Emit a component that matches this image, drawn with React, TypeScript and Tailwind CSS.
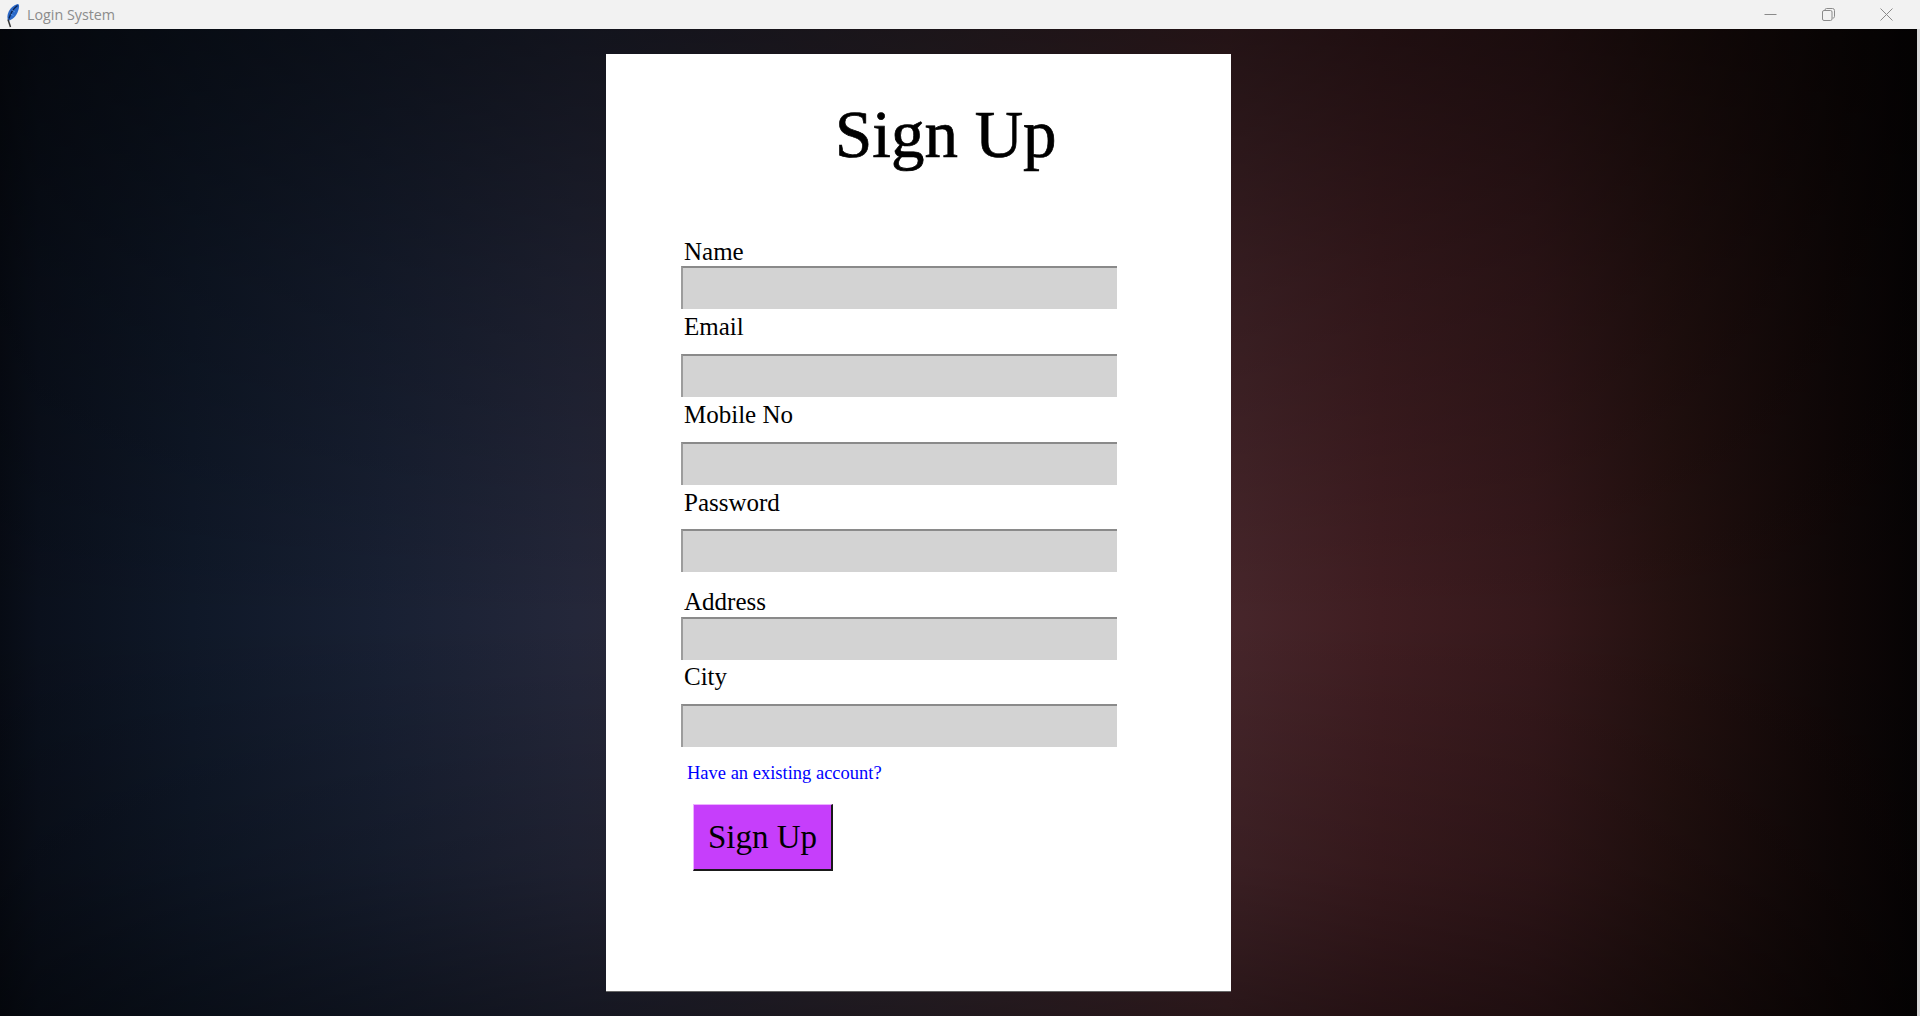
const serif = "font-['Liberation_Serif','Times_New_Roman',serif]";

const fields = [
  { label: 'Name', box: 'mt-0 mb-0' },
  { label: 'Email', box: 'mt-[4px] mb-[13px]' },
  { label: 'Mobile No', box: 'mt-[4px] mb-[13px]' },
  { label: 'Password', box: 'mt-[4px] mb-[12px]' },
  { label: 'Address', box: 'mt-[16px] mb-[1px]' },
  { label: 'City', box: 'mt-[3px] mb-[13px]' },
];

function Feather() {
  return (
    <svg width="18" height="26" viewBox="0 0 18 26" className="ml-[3px] shrink-0">
      <path d="M5 18.500C3 13 6 5 14.500 2c1.800 0 1.800 2 1.300 4.500C14.800 11.500 11.500 16.500 6.500 18.500z" fill="#2a68c8" />
      <path d="M6 16.500C7.500 11 10 7 14.500 3.500" stroke="#0b2350" strokeWidth="1.400" fill="none" />
      <path d="M9 8 12 10M7.500 12 10.500 13.500" stroke="#5c9be8" strokeWidth="0.800" fill="none" />
      <path d="M5 17.500 7.500 25" stroke="#333333" strokeWidth="1.500" fill="none" />
    </svg>
  );
}

export default function App() {
  return (
    <div className="w-full h-[1016px] flex flex-col overflow-hidden">
      <div className="h-[29px] shrink-0 bg-[#f2f2f2] flex items-center">
        <Feather />
        <span className="ml-[6px] text-[14.300px] text-[#8c8c8c] font-['Open_Sans',sans-serif]">Login System</span>
        <div className="ml-auto mr-[5px] flex items-center h-full">
          <div className="w-[58px] h-full flex items-center justify-center">
            <svg width="13" height="13" viewBox="0 0 13 13"><path d="M0.500 6.500H12.500" stroke="#8a8a8a" strokeWidth="1" /></svg>
          </div>
          <div className="w-[58px] h-full flex items-center justify-center">
            <svg width="13" height="13" viewBox="0 0 13 13" fill="none" stroke="#8a8a8a" strokeWidth="1">
              <rect x="0.500" y="2.500" width="9.500" height="10" rx="1.500" />
              <path d="M3 2.500V2A1.500 1.500 0 0 1 4.500 0.500H10.500A2 2 0 0 1 12.500 2.500V8.500A1.500 1.500 0 0 1 10.500 10" />
            </svg>
          </div>
          <div className="w-[58px] h-full flex items-center justify-center">
            <svg width="13" height="13" viewBox="0 0 13 13"><path d="M0.500 0.500 12.500 12.500M12.500 0.500 0.500 12.500" stroke="#8a8a8a" strokeWidth="1" /></svg>
          </div>
        </div>
      </div>

      <div className="flex-1 flex bg-[linear-gradient(180deg,rgba(0,0,0,0.5)_0%,rgba(0,0,0,0.25)_25%,rgba(0,0,0,0)_60%,rgba(0,0,0,0.18)_85%,rgba(0,0,0,0.42)_100%),linear-gradient(90deg,#070b14_0%,#0a101c_2%,#0f1828_10%,#182033_20%,#24273a_30%,#362a33_48%,#47262b_64%,#3f1d21_72%,#35181b_80%,#241110_87%,#0f0707_96%,#060304_100%)] border-r-[3px] border-r-[#d8d8d8]">
        <div className={`ml-[606px] mt-[25px] w-[625px] h-[938px] bg-white border-b border-b-[#666666] flex flex-col items-start text-black ${serif}`}>
          <h1 className="ml-[229px] mt-[40px] mb-[64px] text-[67px] leading-[80px] font-normal [-webkit-text-stroke:0.7px_#000000]">Sign Up</h1>
          <div className="flex flex-col w-full pl-[75px]">
            {fields.map((f) => (
              <div key={f.label} className="flex flex-col">
                <label className={`${f.box} pl-[3px] h-[28px] text-[25px] leading-[28px]`}>{f.label}</label>
                <div className="w-[436px] h-[43px] bg-[#d3d3d3] border-t-2 border-l-2 border-t-[#8a8a8a] border-l-[#9c9c9c]" />
              </div>
            ))}
          </div>
          <a className="ml-[81px] mt-[14px] text-[18.500px] leading-[24px] text-[#0000ff]">Have an existing account?</a>
          <button className="ml-[87px] mt-[19px] w-[140px] h-[67px] bg-[#c63efb] border-t border-l border-t-[#ecb0ff] border-l-[#ecb0ff] border-r-2 border-b-2 border-r-[#1a1a1a] border-b-[#1a1a1a] text-[33px] leading-none text-black">
            Sign Up
          </button>
        </div>
      </div>
    </div>
  );
}
